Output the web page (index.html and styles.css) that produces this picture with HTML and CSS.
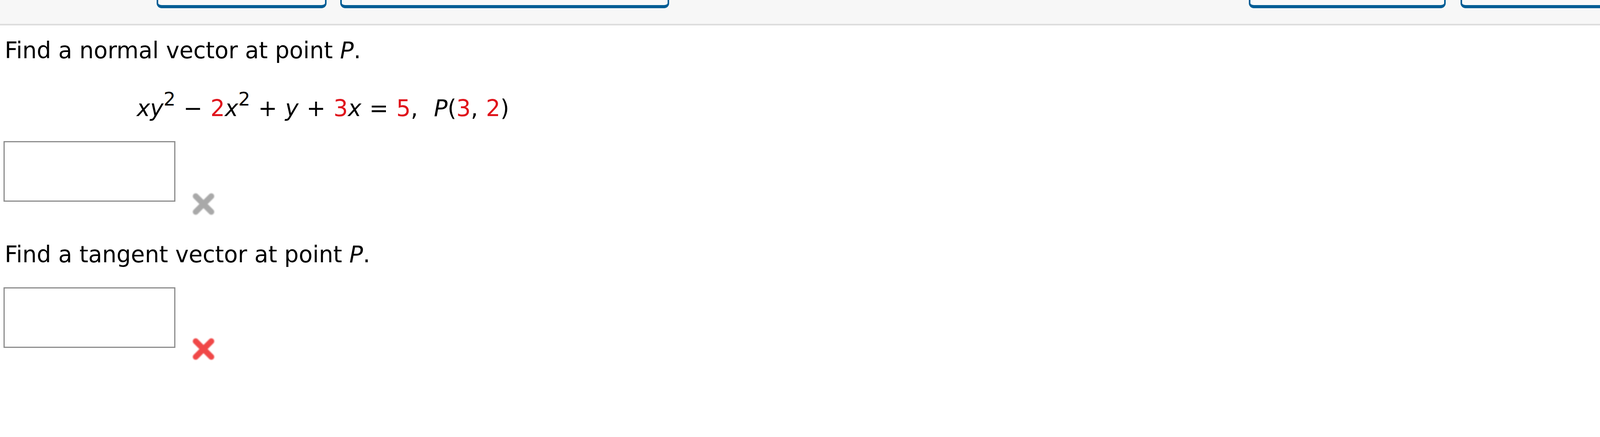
FILE: index.html
```html
<!DOCTYPE html>
<html lang="en">
<head>
<meta charset="utf-8">
<title>Normal and tangent vectors</title>
<link rel="stylesheet" href="styles.css">
</head>
<body>
<header class="toolbar">
  <div class="tabs tabs-left">
    <div class="tab tab-a"></div>
    <div class="tab tab-b"></div>
  </div>
  <div class="tabs tabs-right">
    <div class="tab tab-c"></div>
    <div class="tab tab-d"></div>
    <div class="tab tab-e"></div>
  </div>
</header>
<main class="question">
  <p class="prompt prompt-first">Find a normal vector at point <i>P</i>.</p>
  <p class="equation"><i>x</i><i>y</i><sup>2</sup> &minus; <span class="red">2</span><i>x</i><sup>2</sup> + <i>y</i> + <span class="red">3</span><i>x</i> = <span class="red">5</span>,&nbsp; <i>P</i>(<span class="red">3</span>, <span class="red">2</span>)</p>
  <div class="answer answer-first">
    <div class="answer-box"></div>
    <svg class="mark mark-grey" viewBox="0 0 58 58" aria-hidden="true"><path d="M9 9 L49 49 M49 9 L9 49"/></svg>
  </div>
  <p class="prompt prompt-second">Find a tangent vector at point <i>P</i>.</p>
  <div class="answer answer-second">
    <div class="answer-box"></div>
    <svg class="mark mark-red" viewBox="0 0 58 58" aria-hidden="true"><path d="M9 9 L49 49 M49 9 L9 49"/></svg>
  </div>
</main>
</body>
</html>
```

FILE: styles.css
```css
html, body {
  margin: 0;
  padding: 0;
  background: #ffffff;
}

body {
  font-family: "DejaVu Sans", Verdana, sans-serif;
  color: #000000;
  overflow: hidden;
}

.toolbar {
  height: 61px;
  background: #f7f7f7;
  border-bottom: 4px solid #dddddd;
  display: flex;
  overflow: hidden;
}

.tabs {
  display: flex;
  flex-shrink: 0;
}

.tabs-left {
  margin-left: 401px;
  gap: 35px;
}

.tabs-right {
  margin-left: 1484px;
  gap: 38px;
}

.tab {
  flex-shrink: 0;
  height: 13px;
  background: #f9f9f9;
  border: 4px solid #005d95;
  border-top: none;
  border-bottom-width: 8px;
  border-radius: 0 0 13px 13px;
}

.tab-a { width: 427px; }
.tab-b { width: 834px; }
.tab-c { width: 496px; }
.tab-d { width: 818px; }
.tab-e { width: 822px; }

.question {
  padding-left: 12px;
}

.prompt {
  margin: 0;
  font-size: 58px;
  line-height: 70px;
}

.prompt i {
  font-style: italic;
}

.prompt-first {
  margin-top: 29px;
}

.equation {
  margin: 78px 0 0 0;
  padding-left: 338px;
  font-size: 58px;
  line-height: 70px;
  word-spacing: 2px;
  white-space: pre;
}

.equation sup {
  font-size: 48px;
  line-height: 0;
  vertical-align: 27px;
}

.red {
  color: #e0141c;
}

.answer {
  display: flex;
  align-items: flex-start;
  margin-left: -3px;
}

.answer-first {
  margin-top: 49px;
}

.answer-second {
  margin-top: 49px;
}

.prompt-second {
  margin-top: 65px;
}

.answer-box {
  width: 434px;
  height: 149px;
  border: 3px solid #8c8c8c;
  background: #ffffff;
}

.mark {
  width: 58px;
  height: 58px;
  margin-left: 43px;
  fill: none;
  stroke-width: 15px;
  stroke-linecap: round;
  filter: blur(1.5px);
}

.answer-first .mark {
  margin-top: 132px;
}

.answer-second .mark {
  margin-top: 129px;
}

.mark-grey {
  stroke: #a9a9a9;
}

.mark-red {
  stroke: #f04848;
}
```
